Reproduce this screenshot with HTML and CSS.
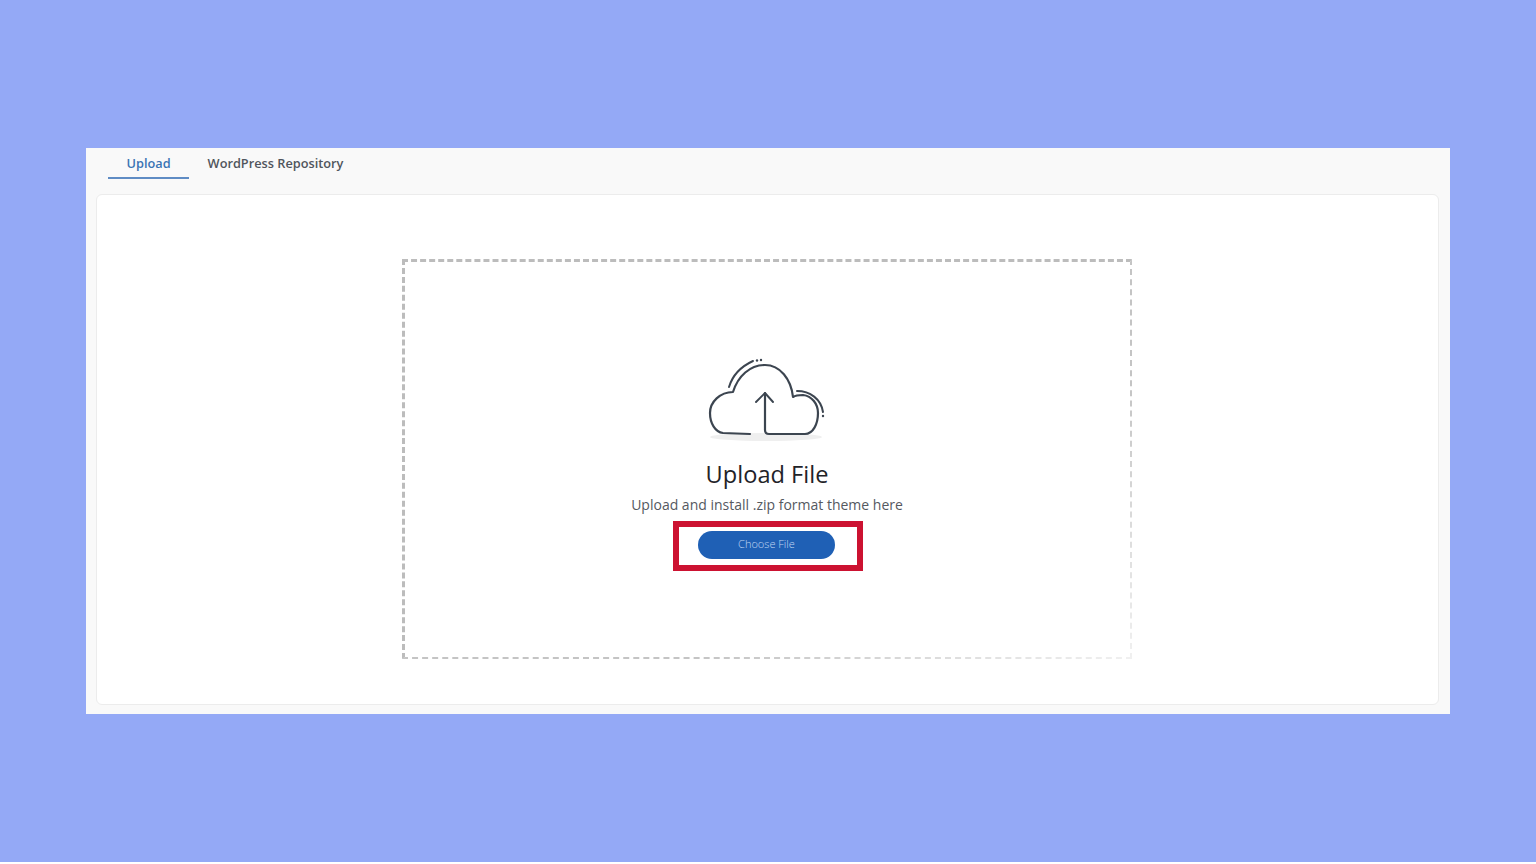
FILE: index.html
```html
<!DOCTYPE html>
<html lang="en">
<head>
    <meta charset="UTF-8">
    <meta name="viewport" content="width=device-width, initial-scale=1.0">
    <title>Upload Theme</title>
    <link rel="stylesheet" href="styles.css">
</head>
<body>
    <div class="panel">
        <div class="tabs">
            <div class="tab active">Upload</div>
            <div class="tab">WordPress Repository</div>
        </div>
        <div class="card">
            <div class="dropzone">
                <svg class="cloud" width="150" height="100" viewBox="0 0 150 100" fill="none" stroke="#3c4550" stroke-linecap="round" stroke-linejoin="round">
                    <ellipse cx="76" cy="87" rx="56" ry="4" fill="#efefef" stroke="none"/>
                    <path stroke-width="2.2" d="M60 84 L33 83 C25 82 20 73 20 63 C20 52 30 42 43 42 C48 26 60 15 75 15 C90 15 101 29 103 47 C106 45 109 45 113 45 C122 46 128 54 128 63 C128 74 123 84 115 84 L79 84 C76 84 75 83 75 80 L75 43"/>
                    <path stroke-width="1.9" d="M66 52 L75 43 L83 52"/>
                    <path stroke-width="2" d="M39 37 C42 27 50 17 63 11"/>
                    <path stroke-width="2" d="M107 41 C120 41 131 49 133 62"/>
                    <circle cx="67" cy="10.5" r="1.2" fill="#3c4550" stroke="none"/>
                    <circle cx="71" cy="10" r="1.2" fill="#3c4550" stroke="none"/>
                    <circle cx="133" cy="66" r="1.2" fill="#3c4550" stroke="none"/>
                </svg>
                <h2 class="title">Upload File</h2>
                <p class="hint">Upload and install .zip format theme here</p>
                <div class="highlight">
                    <button class="btn">Choose File</button>
                </div>
            </div>
        </div>
    </div>
</body>
</html>
```

FILE: styles.css
```css
html {
    background-color: #fff;
}
body {
    margin: 0;
    height: 862px;
    box-sizing: border-box;
    padding: 148px 86px 0;
    overflow: hidden;
    background-color: #94a9f6;
    font-family: "Open Sans", Arial, sans-serif;
}
.panel {
    height: 566px;
    box-sizing: border-box;
    padding: 0 11px 9px 10px;
    background-color: #f9f9f9;
    display: flex;
    flex-direction: column;
}
.tabs {
    height: 46px;
    flex: none;
    display: flex;
    padding-left: 12px;
}
.tab {
    height: 29px;
    padding: 0 18.5px;
    line-height: 31px;
    font-size: 12.75px;
    font-weight: 600;
    color: #50555c;
}
.tab.active {
    color: #3a74b4;
    border-bottom: 2px solid #5f8cc4;
}
.card {
    flex: 1;
    box-sizing: border-box;
    padding-top: 64px;
    background-color: #fff;
    border: 1px solid #ececec;
    border-radius: 6px;
}
.dropzone {
    position: relative;
    width: 730px;
    height: 400px;
    box-sizing: border-box;
    margin-left: 305px;
    padding: 92px 1px 0 0;
    border-style: dashed;
    border-width: 3px 2px 2px 3px;
    border-color: #bcbcbc #c4c4c4 #c4c4c4 #bcbcbc;
    display: flex;
    flex-direction: column;
    align-items: center;
}
/* the bottom and right edges fade out towards their shared corner */
.dropzone::after {
    content: "";
    position: absolute;
    left: 40%;
    right: -2px;
    bottom: -2px;
    height: 2px;
    background: linear-gradient(to right, rgba(255, 255, 255, 0), rgba(255, 255, 255, 0.75));
}
.dropzone::before {
    content: "";
    position: absolute;
    top: 30%;
    bottom: 0;
    right: -2px;
    width: 2px;
    background: linear-gradient(to bottom, rgba(255, 255, 255, 0), rgba(255, 255, 255, 0.75));
}
.cloud {
    display: block;
    flex: none;
    margin: -4px 4px 0 0;
}
.title {
    margin: 7px 0 0;
    font-size: 23.6px;
    line-height: 34px;
    font-weight: 400;
    color: #1f2328;
}
.hint {
    margin: 3px 0 0;
    font-size: 14px;
    line-height: 22px;
    color: #55595f;
}
.highlight {
    margin: 5px 0 0 2px;
    width: 190px;
    height: 50px;
    box-sizing: border-box;
    border: 6px solid #cc1231;
    display: flex;
    align-items: center;
    justify-content: center;
}
.btn {
    width: 137px;
    height: 28px;
    margin: -2px 0 0 -3px;
    padding: 0 0 3px;
    border: none;
    border-radius: 14px;
    background-color: #1f60b5;
    color: #c0d6f2;
    font-family: inherit;
    font-size: 11px;
    font-weight: 300;
    cursor: pointer;
}
```
